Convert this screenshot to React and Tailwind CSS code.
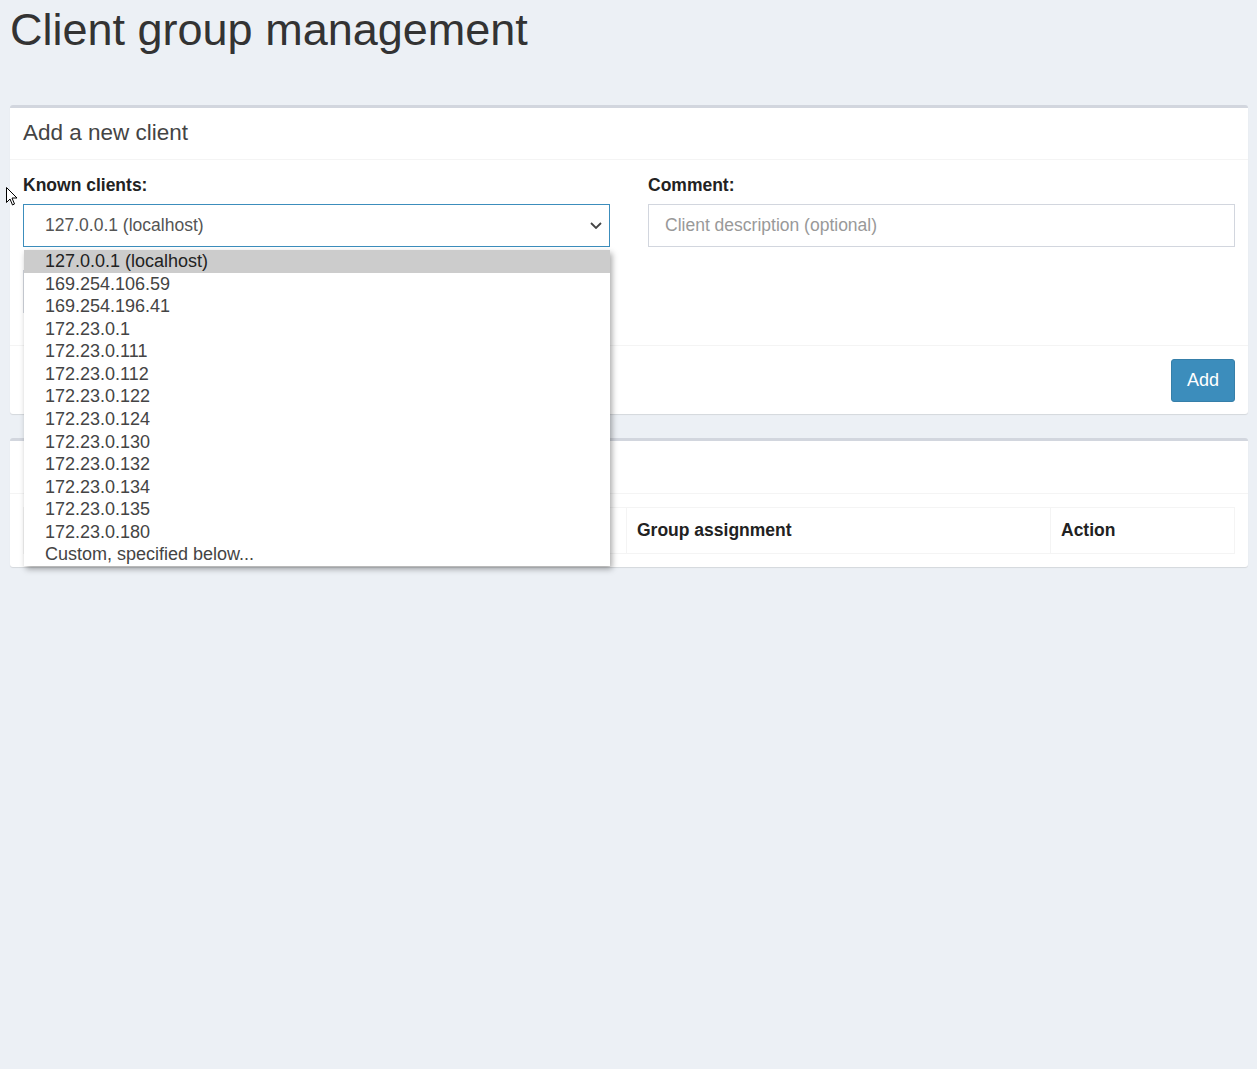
import { useState } from 'react';

const clients = [
  '127.0.0.1 (localhost)',
  '169.254.106.59',
  '169.254.196.41',
  '172.23.0.1',
  '172.23.0.111',
  '172.23.0.112',
  '172.23.0.122',
  '172.23.0.124',
  '172.23.0.130',
  '172.23.0.132',
  '172.23.0.134',
  '172.23.0.135',
  '172.23.0.180',
  'Custom, specified below...',
];

function Chevron() {
  return (
    <svg width="12" height="7" viewBox="0 0 12 7" className="text-[#444]">
      <polyline points="1,1 6,6 11,1" fill="none" stroke="currentColor" strokeWidth="1.8" />
    </svg>
  );
}

function Cursor() {
  return (
    <svg width="12" height="19" viewBox="0 0 12 19" className="absolute left-[6px] top-[187px]">
      <path d="M0.5 0.5 L0.5 15.5 L4 12 L6.5 18 L8.5 17 L6 11 L11 11 Z" fill="#fff" stroke="#000" strokeWidth="1" strokeLinejoin="round" />
    </svg>
  );
}

export default function App() {
  const [selected, setSelected] = useState(0);

  return (
    <div className="relative min-h-[1069px] bg-[#ecf0f5] pl-[10px] pr-[9px] text-[#333] font-['Liberation_Sans',Arial,sans-serif]">
      <h1 className="pt-[5px] text-[45px] leading-[49.5px]">Client group management</h1>

      {/* Add client box */}
      <div className="mt-[50.5px] rounded-[3px] border-t-[3px] border-[#d2d6de] bg-white shadow-[0_1px_1px_rgba(0,0,0,0.1)]">
        <div className="h-[52px] border-b border-[#f4f4f4] px-[13px] flex items-center">
          <h3 className="text-[22.5px] leading-none text-[#444]">Add a new client</h3>
        </div>
        <div className="grid grid-cols-2 gap-[38px] px-[13px] pt-[13px] pb-[32px]">
          <div>
            <label className="block text-[17.5px] font-bold leading-[25px] text-[#222]">Known clients:</label>
            <div className="relative mt-[6px]">
              <div className="flex h-[43px] items-center justify-between border border-[#3c8dbc] pl-[21px] pr-[7px] text-[17.5px] text-[#555]">
                <span>{clients[selected]}</span>
                <Chevron />
              </div>
              <ul className="absolute left-[1px] right-0 top-[46px] z-10 bg-white shadow-[2px_3px_6px_rgba(0,0,0,0.35)]">
                {clients.map((c, i) => (
                  <li key={c} onClick={() => setSelected(i)}
                    className={`pl-[21px] text-[18px] leading-[22.57px] ${i === 0 ? 'bg-[#cccccc] text-[#222]' : 'text-[#444]'}`}>
                    {c}
                  </li>
                ))}
              </ul>
            </div>
            <input className="mt-[23px] block h-[43px] w-full border border-[#d2d6de] px-[16px] text-[17.5px]" />
          </div>
          <div>
            <label className="block text-[17.5px] font-bold leading-[25px] text-[#222]">Comment:</label>
            <input className="mt-[6px] block h-[43px] w-full border border-[#d2d6de] px-[16px] text-[17.5px] text-[#555] placeholder:text-[#999] outline-none"
              placeholder="Client description (optional)" />
          </div>
        </div>
        <div className="flex justify-end border-t border-[#f4f4f4] px-[13px] pt-[13px] pb-[12px]">
          <button className="h-[43px] w-[64px] rounded-[3px] border border-[#367fa9] bg-[#3c8dbc] text-[18px] text-white">Add</button>
        </div>
      </div>

      {/* Clients list box (title and first columns sit under the open dropdown) */}
      <div className="mt-[24px] rounded-[3px] border-t-[3px] border-[#d2d6de] bg-white shadow-[0_1px_1px_rgba(0,0,0,0.1)]">
        <div className="h-[53px] border-b border-[#f4f4f4]" />
        <div className="px-[13px] pt-[13px] pb-[13px]">
          <div className="grid grid-cols-[300px_303px_424px_1fr] border border-[#f4f4f4] text-[17.5px] font-bold text-[#222]">
            <div className="h-[45px] border-r border-[#f4f4f4]" />
            <div className="h-[45px] border-r border-[#f4f4f4]" />
            <div className="h-[45px] flex items-center px-[10px] border-r border-[#f4f4f4]">Group assignment</div>
            <div className="h-[45px] flex items-center px-[10px]">Action</div>
          </div>
        </div>
      </div>

      <Cursor />
    </div>
  );
}
